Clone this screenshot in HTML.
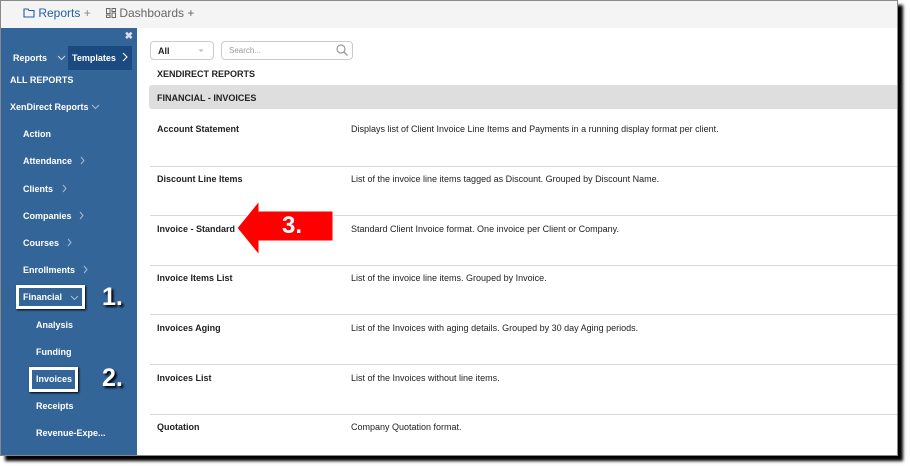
<!DOCTYPE html>
<html><head><style>
*{margin:0;padding:0;box-sizing:border-box}
body{width:910px;height:466px;background:#fff;font-family:"Liberation Sans",Arial,sans-serif;position:relative;overflow:hidden}
.frame{position:absolute;left:0;top:0;width:898px;height:456px;border:1px solid #888;box-shadow:5px 5px 3px #000;background:#fff;overflow:hidden}
.top{position:absolute;left:0;top:0;width:898px;height:27px;background:#f4f4f4}
.top span{position:absolute;top:5px;font-size:12px}
.side{position:absolute;left:0;top:27px;width:136px;height:430px;background:#346599;color:#fff;font-size:9px;font-weight:bold}
.side div{position:absolute;white-space:nowrap}
.side svg{position:absolute}
.main{position:absolute;left:136px;top:27px;width:762px;height:430px}
.t{position:absolute;font-size:9px;color:#222;white-space:nowrap}
.b{font-weight:bold}
.sep{position:absolute;left:13px;width:750px;height:1px;background:#d8d8d8}
.num{position:absolute;color:#fff;font-weight:bold;font-size:25px;text-shadow:2px 2px 2px #000}
</style></head><body>
<div class="frame">
<div class="top">
<span style="left:22px;color:#1f5fa8"><svg width="12" height="10" viewBox="0 0 12 10" style="vertical-align:-1px"><path d="M1 1h4l1 1.5h5v6.5h-10z" fill="none" stroke="#1f5fa8" stroke-width="1.1"/></svg> Reports <span style="position:static;color:#888">+</span></span>
<span style="left:105px;color:#666"><svg width="10" height="10" viewBox="0 0 10 10" style="vertical-align:-1px"><rect x="0.5" y="0.5" width="3.5" height="5" fill="none" stroke="#666"/><rect x="6" y="0.5" width="3.5" height="3" fill="none" stroke="#666"/><rect x="0.5" y="7" width="3.5" height="2.5" fill="none" stroke="#666"/><rect x="6" y="5" width="3.5" height="4.5" fill="none" stroke="#666"/></svg> Dashboards +</span>
</div>
<div class="side">
<div style="right:4px;top:3px;font-size:10px;color:#dde">✖</div>
<div style="left:67px;top:18px;width:64px;height:24px;background:#1b4a80"></div>
<div style="left:12px;top:25px">Reports</div>
<svg style="left:56px;top:27px" width="9" height="6" viewBox="0 0 9 6"><path d="M1 1l3.5 3.5L8 1" fill="none" stroke="#c8d6e8" stroke-width="1"/></svg>
<div style="left:71px;top:25px">Templates</div>
<svg style="left:121px;top:24px" width="6" height="10" viewBox="0 0 6 10"><path d="M1 1l4 4-4 4" fill="none" stroke="#fff" stroke-width="1.1"/></svg>
<div style="left:9px;top:47px">ALL REPORTS</div>
<div style="left:9px;top:74px">XenDirect Reports</div>
<svg style="left:90px;top:76px" width="9" height="6" viewBox="0 0 9 6"><path d="M1 1l3.5 3.5L8 1" fill="none" stroke="#a8bcd6" stroke-width="1"/></svg>
<div style="left:22px;top:101px">Action</div>
<div style="left:22px;top:128px">Attendance</div>
<svg style="left:79px;top:128px" width="5" height="9" viewBox="0 0 5 9"><path d="M1 1l3 3.5L1 8" fill="none" stroke="#a8bcd6"/></svg>
<div style="left:22px;top:156px">Clients</div>
<svg style="left:61px;top:156px" width="5" height="9" viewBox="0 0 5 9"><path d="M1 1l3 3.5L1 8" fill="none" stroke="#a8bcd6"/></svg>
<div style="left:22px;top:183px">Companies</div>
<svg style="left:78px;top:183px" width="5" height="9" viewBox="0 0 5 9"><path d="M1 1l3 3.5L1 8" fill="none" stroke="#a8bcd6"/></svg>
<div style="left:22px;top:210px">Courses</div>
<svg style="left:66px;top:210px" width="5" height="9" viewBox="0 0 5 9"><path d="M1 1l3 3.5L1 8" fill="none" stroke="#a8bcd6"/></svg>
<div style="left:22px;top:237px">Enrollments</div>
<svg style="left:82px;top:237px" width="5" height="9" viewBox="0 0 5 9"><path d="M1 1l3 3.5L1 8" fill="none" stroke="#a8bcd6"/></svg>
<div style="left:15px;top:257px;width:69px;height:24px;border:3px solid #fff;box-shadow:1px 1px 2px #000"></div>
<div style="left:22px;top:264px">Financial</div>
<svg style="left:69px;top:267px" width="9" height="6" viewBox="0 0 9 6"><path d="M1 1l3.5 3.5L8 1" fill="none" stroke="#a8bcd6" stroke-width="1"/></svg>
<div style="left:35px;top:292px">Analysis</div>
<div style="left:35px;top:319px">Funding</div>
<div style="left:28px;top:339px;width:49px;height:25px;border:3px solid #fff;box-shadow:1px 1px 2px #000"></div>
<div style="left:35px;top:346px">Invoices</div>
<div style="left:35px;top:373px">Receipts</div>
<div style="left:35px;top:400px">Revenue-Expe...</div>
</div>
<div class="num" style="left:101px;top:282px">1.</div>
<div class="num" style="left:101px;top:363px">2.</div>
<div class="main">
<div style="position:absolute;left:13px;top:13px;width:64px;height:19px;border:1px solid #ccc;border-radius:4px"></div>
<div class="t b" style="left:21px;top:18px">All</div>
<svg style="position:absolute;left:61px;top:21px" width="6" height="4" viewBox="0 0 6 4"><path d="M0.5 0.5h5L3 3z" fill="#bbb"/></svg>
<div style="position:absolute;left:84px;top:13px;width:132px;height:19px;border:1px solid #ccc;border-radius:4px"></div>
<div class="t" style="left:92px;top:18px;color:#999;font-size:8px">Search...</div>
<svg style="position:absolute;left:199px;top:16px" width="12" height="12" viewBox="0 0 12 12"><circle cx="5" cy="5" r="4" fill="none" stroke="#999" stroke-width="1.2"/><path d="M8 8l3.5 3.5" stroke="#999" stroke-width="1.3"/></svg>
<div class="t b" style="left:20px;top:41px">XENDIRECT REPORTS</div>
<div style="position:absolute;left:12px;top:57px;width:752px;height:24px;background:#dedede;border-radius:3px"></div>
<div class="t b" style="left:20px;top:65px">FINANCIAL - INVOICES</div>
<div class="t b" style="left:20px;top:96px">Account Statement</div><div class="t" style="left:214px;top:96px">Displays list of Client Invoice Line Items and Payments in a running display format per client.</div>
<div class="sep" style="top:138px"></div>
<div class="t b" style="left:20px;top:146px">Discount Line Items</div><div class="t" style="left:214px;top:146px">List of the invoice line items tagged as Discount. Grouped by Discount Name.</div>
<div class="sep" style="top:187px"></div>
<div class="t b" style="left:20px;top:196px">Invoice - Standard</div><div class="t" style="left:214px;top:196px">Standard Client Invoice format. One invoice per Client or Company.</div>
<div class="sep" style="top:237px"></div>
<div class="t b" style="left:20px;top:245px">Invoice Items List</div><div class="t" style="left:214px;top:245px">List of the invoice line items. Grouped by Invoice.</div>
<div class="sep" style="top:286px"></div>
<div class="t b" style="left:20px;top:295px">Invoices Aging</div><div class="t" style="left:214px;top:295px">List of the Invoices with aging details. Grouped by 30 day Aging periods.</div>
<div class="sep" style="top:336px"></div>
<div class="t b" style="left:20px;top:345px">Invoices List</div><div class="t" style="left:214px;top:345px">List of the Invoices without line items.</div>
<div class="sep" style="top:386px"></div>
<div class="t b" style="left:20px;top:394px">Quotation</div><div class="t" style="left:214px;top:394px">Company Quotation format.</div>
</div>
<svg style="position:absolute;left:234px;top:199px" width="100" height="57" viewBox="0 0 100 57"><path d="M2 28L24 1V11H98V41H24V55Z" fill="#f00" stroke="#fff" stroke-width="1"/></svg>
<div style="position:absolute;left:281px;top:211px;color:#fff;font-weight:bold;font-size:24px">3.</div>
</div>
</body></html>
